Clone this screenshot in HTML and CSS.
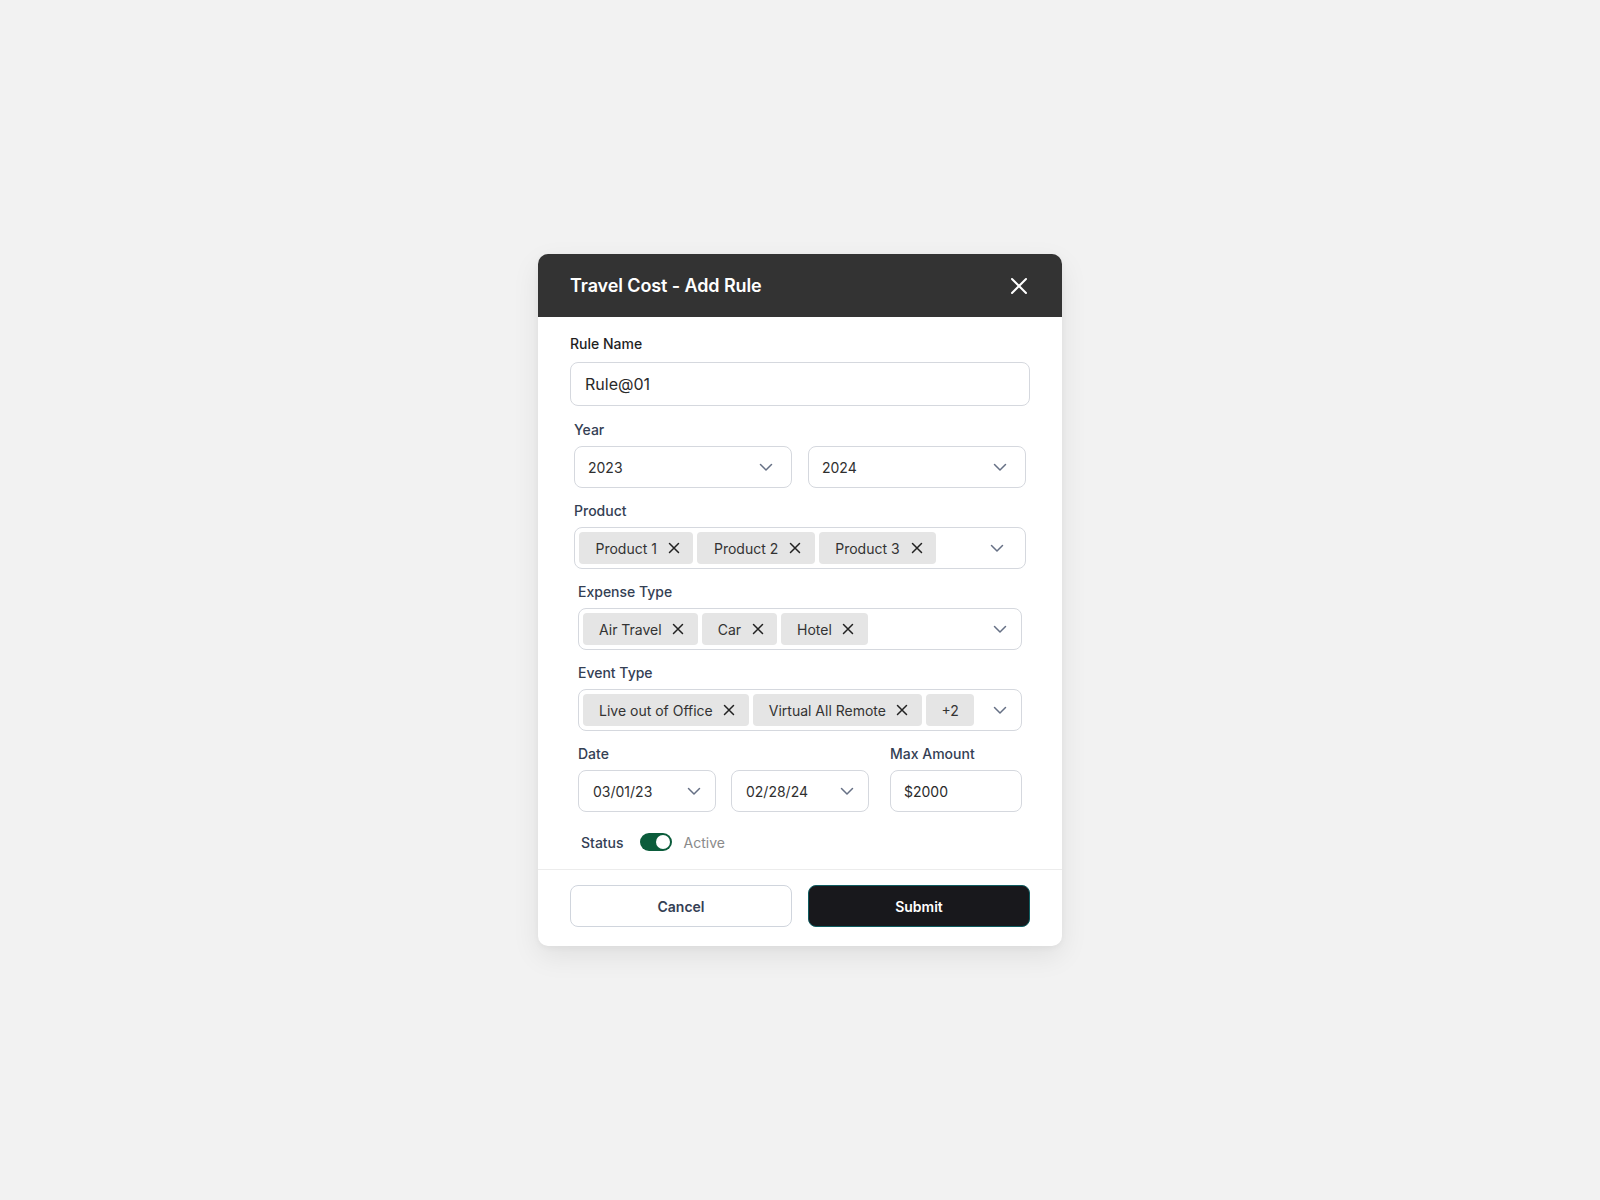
FILE: index.html
```html
<!DOCTYPE html>
<html lang="en">
<head>
<meta charset="utf-8">
<title>Travel Cost - Add Rule</title>
<link rel="stylesheet" href="styles.css">
</head>
<body>
<div class="page">
  <div class="dialog">
    <div class="dialog-header">
      <h1 class="dialog-title">Travel Cost - Add Rule</h1>
      <button class="close-btn" aria-label="Close">
        <svg width="24" height="24" viewBox="0 0 24 24" fill="none" stroke="#fff" stroke-width="2" stroke-linecap="round"><path d="M5 5L19 19M19 5L5 19"/></svg>
      </button>
    </div>

    <div class="dialog-body">
      <div class="field field-name">
        <label class="label label-dark">Rule Name</label>
        <div class="input input-lg">Rule@01</div>
      </div>

      <div class="field inset-4">
        <label class="label">Year</label>
        <div class="two-col">
          <div class="select select-year"><span>2023</span>
            <svg class="chev" width="16" height="16" viewBox="0 0 16 16" fill="none" stroke="#667085" stroke-width="1.5" stroke-linecap="round" stroke-linejoin="round"><path d="M2.5 5.5L8 11L13.5 5.5"/></svg>
          </div>
          <div class="select select-year"><span>2024</span>
            <svg class="chev" width="16" height="16" viewBox="0 0 16 16" fill="none" stroke="#667085" stroke-width="1.5" stroke-linecap="round" stroke-linejoin="round"><path d="M2.5 5.5L8 11L13.5 5.5"/></svg>
          </div>
        </div>
      </div>

      <div class="field inset-4">
        <label class="label">Product</label>
        <div class="multi multi-product">
          <div class="chips">
            <span class="chip">Product 1<svg width="16" height="16" viewBox="0 0 16 16" fill="none" stroke="#222" stroke-width="1.5" stroke-linecap="round"><path d="M3.5 3.5L12.5 12.5M12.5 3.5L3.5 12.5"/></svg></span>
            <span class="chip">Product 2<svg width="16" height="16" viewBox="0 0 16 16" fill="none" stroke="#222" stroke-width="1.5" stroke-linecap="round"><path d="M3.5 3.5L12.5 12.5M12.5 3.5L3.5 12.5"/></svg></span>
            <span class="chip">Product 3<svg width="16" height="16" viewBox="0 0 16 16" fill="none" stroke="#222" stroke-width="1.5" stroke-linecap="round"><path d="M3.5 3.5L12.5 12.5M12.5 3.5L3.5 12.5"/></svg></span>
          </div>
          <svg class="chev" width="16" height="16" viewBox="0 0 16 16" fill="none" stroke="#667085" stroke-width="1.5" stroke-linecap="round" stroke-linejoin="round"><path d="M2.5 5.5L8 11L13.5 5.5"/></svg>
        </div>
      </div>

      <div class="field inset-8">
        <label class="label">Expense Type</label>
        <div class="multi multi-compact">
          <div class="chips">
            <span class="chip">Air Travel<svg width="16" height="16" viewBox="0 0 16 16" fill="none" stroke="#222" stroke-width="1.5" stroke-linecap="round"><path d="M3.5 3.5L12.5 12.5M12.5 3.5L3.5 12.5"/></svg></span>
            <span class="chip">Car<svg width="16" height="16" viewBox="0 0 16 16" fill="none" stroke="#222" stroke-width="1.5" stroke-linecap="round"><path d="M3.5 3.5L12.5 12.5M12.5 3.5L3.5 12.5"/></svg></span>
            <span class="chip">Hotel<svg width="16" height="16" viewBox="0 0 16 16" fill="none" stroke="#222" stroke-width="1.5" stroke-linecap="round"><path d="M3.5 3.5L12.5 12.5M12.5 3.5L3.5 12.5"/></svg></span>
          </div>
          <svg class="chev" width="16" height="16" viewBox="0 0 16 16" fill="none" stroke="#667085" stroke-width="1.5" stroke-linecap="round" stroke-linejoin="round"><path d="M2.5 5.5L8 11L13.5 5.5"/></svg>
        </div>
      </div>

      <div class="field inset-8">
        <label class="label">Event Type</label>
        <div class="multi multi-compact">
          <div class="chips">
            <span class="chip">Live out of Office<svg width="16" height="16" viewBox="0 0 16 16" fill="none" stroke="#222" stroke-width="1.5" stroke-linecap="round"><path d="M3.5 3.5L12.5 12.5M12.5 3.5L3.5 12.5"/></svg></span>
            <span class="chip">Virtual All Remote<svg width="16" height="16" viewBox="0 0 16 16" fill="none" stroke="#222" stroke-width="1.5" stroke-linecap="round"><path d="M3.5 3.5L12.5 12.5M12.5 3.5L3.5 12.5"/></svg></span>
            <span class="chip chip-more">+2</span>
          </div>
          <svg class="chev" width="16" height="16" viewBox="0 0 16 16" fill="none" stroke="#667085" stroke-width="1.5" stroke-linecap="round" stroke-linejoin="round"><path d="M2.5 5.5L8 11L13.5 5.5"/></svg>
        </div>
      </div>

      <div class="date-row inset-8">
        <div class="field field-date">
          <label class="label">Date</label>
          <div class="two-col">
            <div class="select select-date"><span>03/01/23</span>
              <svg class="chev" width="16" height="16" viewBox="0 0 16 16" fill="none" stroke="#667085" stroke-width="1.5" stroke-linecap="round" stroke-linejoin="round"><path d="M2.5 5.5L8 11L13.5 5.5"/></svg>
            </div>
            <div class="select select-date"><span>02/28/24</span>
              <svg class="chev" width="16" height="16" viewBox="0 0 16 16" fill="none" stroke="#667085" stroke-width="1.5" stroke-linecap="round" stroke-linejoin="round"><path d="M2.5 5.5L8 11L13.5 5.5"/></svg>
            </div>
          </div>
        </div>
        <div class="field field-amount">
          <label class="label">Max Amount</label>
          <div class="input input-sm">$2000</div>
        </div>
      </div>

      <div class="status-row">
        <span class="status-label">Status</span>
        <span class="toggle"><span class="knob"></span></span>
        <span class="status-value">Active</span>
      </div>
    </div>

    <div class="dialog-footer">
      <button class="btn btn-cancel">Cancel</button>
      <button class="btn btn-submit">Submit</button>
    </div>
  </div>
</div>
</body>
</html>
```

FILE: styles.css
```css
* { box-sizing: border-box; }

html, body {
  margin: 0;
  padding: 0;
  background: #f2f2f2;
  font-family: Inter, "Noto Sans", "Liberation Sans", sans-serif;
  color: #333;
}

.page {
  min-height: 100vh;
  display: flex;
  align-items: center;
  justify-content: center;
}

.dialog {
  width: 524px;
  background: #fff;
  border-radius: 10px;
  overflow: hidden;
  box-shadow: 0 10px 28px rgba(0, 0, 0, 0.08), 0 2px 6px rgba(0, 0, 0, 0.04);
}

.dialog-header {
  height: 63px;
  background: #333333;
  display: flex;
  align-items: center;
  justify-content: space-between;
  padding: 0 31px 0 32px;
}

.dialog-title {
  margin: 0;
  font-size: 18px;
  font-weight: 600;
  color: #fff;
  letter-spacing: -0.1px;
}

.close-btn {
  width: 24px;
  height: 24px;
  padding: 0;
  border: 0;
  background: none;
  display: flex;
  align-items: center;
  justify-content: center;
  cursor: pointer;
}

.dialog-body {
  padding: 17px 32px 17px;
  display: flex;
  flex-direction: column;
  gap: 12px;
}

.field {
  display: flex;
  flex-direction: column;
  gap: 7px;
}

.field-name {
  gap: 8px;
  margin-bottom: 1px;
}

.inset-4 { padding: 0 4px; }
.inset-8 { padding: 0 8px; }

.label {
  font-size: 14px;
  line-height: 20px;
  font-weight: 500;
  color: #344054;
  position: relative;
  top: 0.5px;
}

.label-dark { color: #1f1f1f; top: 0; }

.input {
  border: 1px solid #d5d8de;
  border-radius: 8px;
  background: #fff;
  display: flex;
  align-items: center;
  color: #2a2a2a;
}

.input-lg {
  height: 44px;
  padding: 0 14px;
  font-size: 16px;
}

.input-sm {
  height: 42px;
  padding: 0 13px;
  font-size: 14px;
}

.two-col {
  display: grid;
  grid-template-columns: 1fr 1fr;
  gap: 16px;
}

.select {
  height: 42px;
  border: 1px solid #d5d8de;
  border-radius: 8px;
  display: flex;
  align-items: center;
  justify-content: space-between;
  font-size: 14px;
  color: #2f2f2f;
}

.select-year { padding: 0 17px 0 13px; }
.select-date { padding: 0 13px 0 14px; }

.chev { flex: none; display: block; }

.multi {
  height: 42px;
  border: 1px solid #d5d8de;
  border-radius: 8px;
  display: flex;
  align-items: center;
  justify-content: space-between;
  padding: 4px 13px 4px 4px;
}

.multi-product { padding-right: 20px; }

.chips {
  display: flex;
  gap: 4px;
  height: 32px;
}

.chip {
  height: 32px;
  background: #e5e5e5;
  border-radius: 4px;
  display: inline-flex;
  align-items: center;
  gap: 9px;
  padding: 0 11.5px 0 16.5px;
  font-size: 14px;
  color: #333;
  white-space: nowrap;
}

.multi-compact .chip {
  gap: 8.5px;
  padding: 0 11.5px 0 16px;
}

.chip svg { display: block; flex: none; }

.multi-compact .chip-more {
  padding: 0 15.5px;
}

.date-row {
  display: flex;
  gap: 21px;
}

.field-date { width: 291px; flex: none; }
.field-date .two-col { gap: 15px; }
.field-amount { flex: 1; }

.status-row {
  margin-top: 8px;
  padding: 0 11px;
  height: 20px;
  display: flex;
  align-items: center;
}

.status-label {
  font-size: 14px;
  font-weight: 500;
  color: #344054;
  margin-right: 16px;
}

.toggle {
  width: 32px;
  height: 18px;
  border-radius: 9px;
  background: #0b5c3b;
  position: relative;
  margin-right: 12px;
}

.knob {
  position: absolute;
  top: 2px;
  right: 2px;
  width: 14px;
  height: 14px;
  border-radius: 50%;
  background: #fff;
}

.status-value {
  font-size: 14px;
  color: #8a8a8a;
}

.dialog-footer {
  border-top: 1px solid #ececec;
  padding: 15px 32px 19px;
  display: grid;
  grid-template-columns: 1fr 1fr;
  gap: 16px;
}

.btn {
  height: 42px;
  border-radius: 8px;
  font-family: inherit;
  font-size: 14px;
  font-weight: 600;
  cursor: pointer;
}

.btn-cancel {
  background: #fff;
  border: 1px solid #d0d5dd;
  color: #344054;
}

.btn-submit {
  background: #18181c;
  border: 1px solid #0e5c60;
  color: #fff;
}
```
